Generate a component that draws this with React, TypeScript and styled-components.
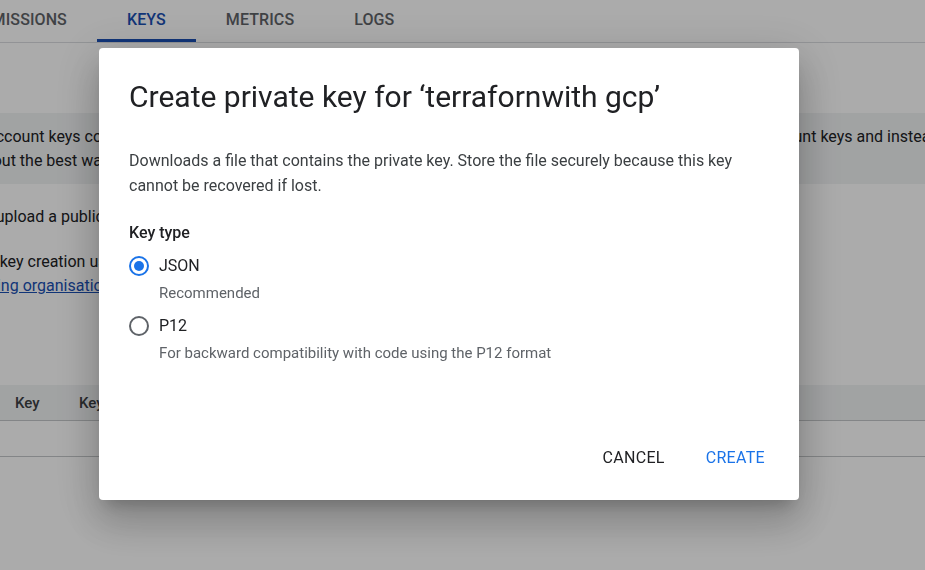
import React from "react";
import styled, { createGlobalStyle } from "styled-components";

const GlobalStyle = createGlobalStyle`
  html, body {
    margin: 0;
    padding: 0;
    width: 100%;
    height: 100%;
    overflow: hidden;
    background: #ffffff;
    font-family: Roboto, "Liberation Sans", Arial, sans-serif;
    color: #3c4043;
  }
`;

const Page = styled.div`
  width: 925px;
  height: 570px;
  overflow: hidden;
  background: #ffffff;
`;

const TabBar = styled.div`
  display: flex;
  height: 42px;
  border-bottom: 1px solid #dadce0;
  margin-left: -68px;
`;

const Tab = styled.div<{ $active?: boolean }>`
  display: flex;
  align-items: center;
  justify-content: center;
  padding: 0 30px 4px;
  font-size: 16px;
  font-weight: 500;
  letter-spacing: 0.1px;
  text-transform: uppercase;
  color: ${(p) => (p.$active ? "#1a4fb3" : "#5f6368")};
  box-shadow: ${(p) => (p.$active ? "inset 0 -3px 0 #1a4fb3" : "none")};
`;

const Content = styled.div`
  margin-left: -160px;
  white-space: nowrap;
  font-size: 16px;
  line-height: 24px;
  color: #202124;
`;

const Banner = styled.div`
  margin-top: 70px;
  height: 71px;
  box-sizing: border-box;
  padding: 12px 0 0 91px;
  background: #f1f3f4;
`;

const Para = styled.p<{ $gap: number }>`
  margin: ${(p) => p.$gap}px 0 0;
`;

const Link = styled.a`
  display: block;
  color: #1a4fb3;
  text-decoration: underline;
`;

const TableHead = styled.div`
  display: flex;
  margin-top: 87px;
  height: 35px;
  align-items: center;
  background: #f1f3f4;
  border-bottom: 1px solid #c4c7c9;
  font-size: 15px;
  font-weight: 500;
  color: #3c4043;
`;

const HeadCell = styled.div<{ $w: number }>`
  width: ${(p) => p.$w}px;
  flex-shrink: 0;
`;

const EmptyRow = styled.div`
  height: 35px;
  border-bottom: 1px solid #c4c7c9;
`;

const Scrim = styled.div`
  position: fixed;
  inset: 0;
  background: rgba(0, 0, 0, 0.33);
  display: flex;
  align-items: flex-start;
  padding: 48px 0 0 99px;
`;

const Dialog = styled.div`
  width: 700px;
  height: 452px;
  box-sizing: border-box;
  background: #ffffff;
  border-radius: 4px;
  box-shadow: 0 11px 15px -7px rgba(0, 0, 0, 0.2),
    0 24px 38px 3px rgba(0, 0, 0, 0.14), 0 9px 46px 8px rgba(0, 0, 0, 0.12);
  padding: 31px 22px 25px 30px;
  display: flex;
  flex-direction: column;
`;

const Title = styled.h2`
  margin: 0;
  font-size: 30px;
  line-height: 36px;
  font-weight: 400;
  color: #202124;
`;

const Body = styled.p`
  margin: 33px 0 0;
  font-size: 16px;
  line-height: 25px;
  color: #3c4043;
  padding-right: 20px;
`;

const Label = styled.div`
  margin-top: 23px;
  font-size: 16px;
  line-height: 24px;
  font-weight: 500;
  color: #202124;
`;

const Option = styled.label<{ $gap: number }>`
  display: flex;
  align-items: center;
  gap: 10px;
  margin-top: ${(p) => p.$gap}px;
  font-size: 16px;
  line-height: 24px;
  color: #202124;
`;

const Radio = styled.span<{ $checked?: boolean }>`
  width: 20px;
  height: 20px;
  box-sizing: border-box;
  border-radius: 50%;
  border: 2px solid ${(p) => (p.$checked ? "#1a73e8" : "#5f6368")};
  display: flex;
  align-items: center;
  justify-content: center;
  &::after {
    content: "";
    width: 10px;
    height: 10px;
    border-radius: 50%;
    background: ${(p) => (p.$checked ? "#1a73e8" : "transparent")};
  }
`;

const Hint = styled.div<{ $gap: number }>`
  margin: ${(p) => p.$gap}px 0 0 30px;
  font-size: 15px;
  line-height: 20px;
  color: #5f6368;
`;

const Actions = styled.div`
  margin-top: auto;
  display: flex;
  justify-content: flex-end;
  gap: 17px;
`;

const Button = styled.button<{ $primary?: boolean }>`
  height: 36px;
  padding: 0 12px;
  border: none;
  background: transparent;
  font-family: inherit;
  font-size: 16px;
  font-weight: 400;
  letter-spacing: 0.3px;
  text-transform: uppercase;
  color: ${(p) => (p.$primary ? "#1a73e8" : "#202124")};
  cursor: pointer;
`;

export default function App() {
  return (
    <>
      <GlobalStyle />
      <Page>
        <TabBar>
          <Tab>Permissions</Tab>
          <Tab $active>Keys</Tab>
          <Tab>Metrics</Tab>
          <Tab>Logs</Tab>
        </TabBar>
        <Content>
          <Banner>
            <div>
              Service account keys could pose a security risk if compromised. We recommend that you avoid downloading service account keys and instead use Workload Identity Federation.
            </div>
            <div>
              Learn about the best way to authenticate service accounts on Google Cloud here.
            </div>
          </Banner>
          <Para $gap={21}>
            Add a new key pair or upload a public key certificate from an existing key pair.
          </Para>
          <Para $gap={21}>
            Block service account key creation using organisation policies.
          </Para>
          <Link>Learn more about setting organisation policies for service accounts</Link>
          <TableHead>
            <HeadCell $w={88}>Type</HeadCell>
            <HeadCell $w={87}>Status</HeadCell>
            <HeadCell $w={64}>Key</HeadCell>
            <HeadCell $w={170}>Key creation date</HeadCell>
            <HeadCell $w={170}>Key expiry date</HeadCell>
          </TableHead>
          <EmptyRow />
        </Content>
      </Page>
      <Scrim>
        <Dialog>
          <Title>Create private key for ‘terrafornwith gcp’</Title>
          <Body>
            Downloads a file that contains the private key. Store the file securely because this key cannot be recovered if lost.
          </Body>
          <Label>Key type</Label>
          <Option $gap={9}>
            <Radio $checked />
            JSON
          </Option>
          <Hint $gap={5}>Recommended</Hint>
          <Option $gap={11}>
            <Radio />
            P12
          </Option>
          <Hint $gap={5}>For backward compatibility with code using the P12 format</Hint>
          <Actions>
            <Button>Cancel</Button>
            <Button $primary>Create</Button>
          </Actions>
        </Dialog>
      </Scrim>
    </>
  );
}
